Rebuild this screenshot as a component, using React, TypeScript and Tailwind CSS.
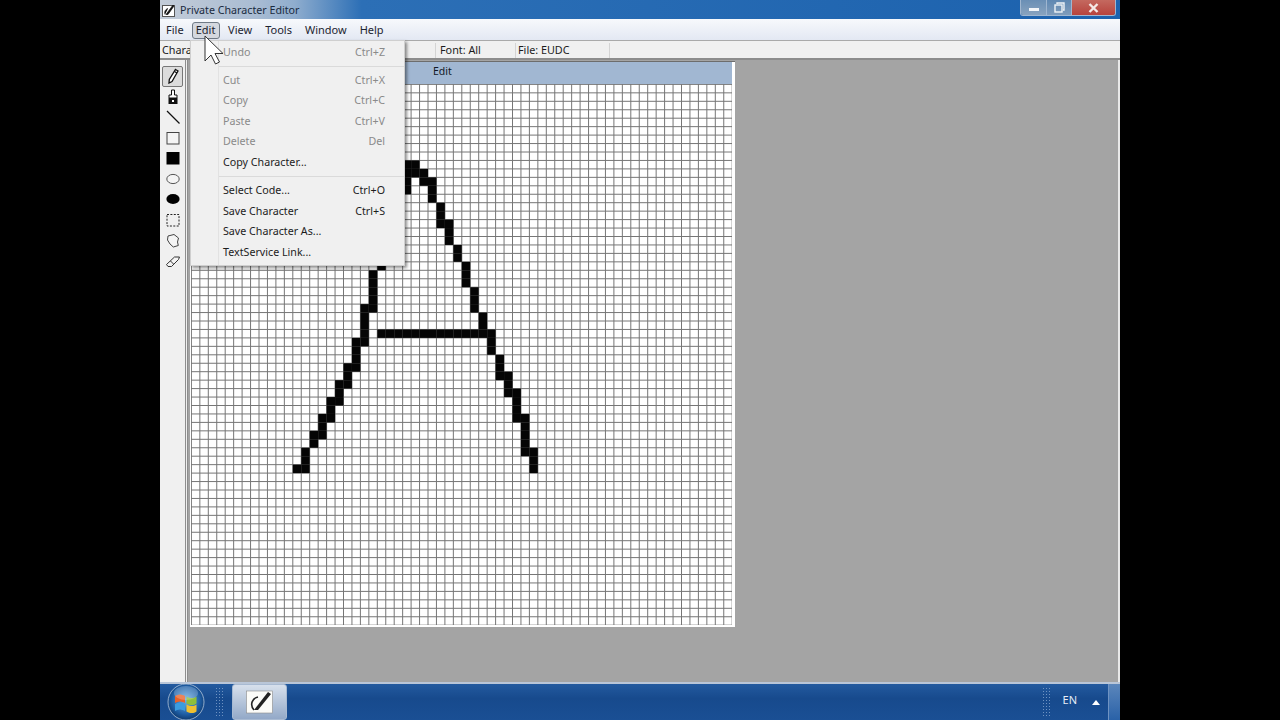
import React from "react";

const uiFont = { fontFamily: '"Noto Sans", "Open Sans", sans-serif' };

// [column, first row, last row] of the black squares on the 64x64 grid
const glyphRuns: [number, number, number][] = [
  [12, 45, 45], [13, 43, 45], [14, 41, 42], [15, 39, 41], [16, 37, 39], [17, 35, 37],
  [18, 33, 35], [19, 30, 33], [20, 26, 30], [21, 22, 26], [22, 19, 21], [23, 15, 18],
  [24, 11, 14], [25, 9, 12], [26, 9, 10], [27, 10, 11], [28, 11, 13], [29, 14, 16],
  [30, 16, 18], [31, 19, 20], [32, 21, 23], [33, 24, 26], [34, 27, 29], [35, 29, 31],
  [36, 32, 34], [37, 34, 36], [38, 36, 39], [39, 39, 43], [40, 43, 45],
  [22, 29, 29], [23, 29, 29], [24, 29, 29], [25, 29, 29], [26, 29, 29], [27, 29, 29],
  [28, 29, 29], [29, 29, 29], [30, 29, 29], [31, 29, 29], [32, 29, 29], [33, 29, 29],
];

const CELL = 8.45;

function EditGrid() {
  const lines = Array.from({ length: 65 }, (_, i) => i * CELL + 0.4);
  const cells: [number, number][] = [];
  glyphRuns.forEach(([c, a, b]) => {
    for (let r = a; r <= b; r++) cells.push([c, r]);
  });
  return (
    <svg width="541" height="541" viewBox="0 0 541 541" className="block bg-white">
      {lines.map((p) => (
        <g key={p} stroke="#767676" strokeWidth="1">
          <line x1={p} y1="0" x2={p} y2="541" />
          <line x1="0" y1={p} x2="541" y2={p} />
        </g>
      ))}
      {cells.map(([c, r]) => (
        <rect key={`${c}-${r}`} x={c * CELL + 0.4} y={r * CELL + 0.4} width={CELL} height={CELL} fill="#050505" />
      ))}
    </svg>
  );
}

const toolIcons: React.ReactNode[] = [
  <g fill="none" stroke="#111" strokeWidth="1.3">
    <path d="M10.5 1.5 13 3 7 13.5 4 15l.3-3.5z" fill="#fff" />
    <path d="M9.5 3.5 12 5" />
  </g>,
  <g fill="#111">
    <path d="M6.5 1h3v5h2.5v3H4V6h2.5z" fill="#fff" stroke="#111" />
    <path d="M3.5 9h9v6h-9z" />
    <path d="M7 11h2v2H7z" fill="#fff" />
  </g>,
  <path d="M2 2 14.5 14.5" stroke="#111" strokeWidth="1.2" />,
  <rect x="2" y="2.5" width="12" height="11.5" fill="#f4f4f4" stroke="#444" />,
  <rect x="1.5" y="2" width="13" height="12.5" fill="#000" />,
  <ellipse cx="8" cy="8" rx="6.2" ry="4.6" fill="#f4f4f4" stroke="#555" />,
  <ellipse cx="8" cy="8" rx="6.6" ry="5" fill="#000" />,
  <rect x="2" y="2.5" width="12" height="11.5" fill="none" stroke="#222" strokeDasharray="2 1.4" />,
  <path d="M3 4 9 2.5l4.5 3.5-1 4 .8 3.5-5 1.5L5 12 2.5 8z" fill="#f4f4f4" stroke="#444" />,
  <g stroke="#333" fill="#f4f4f4">
    <path d="M1.5 11.5 9.5 4h5l-1 2.5L6.5 13.5H3z" />
    <path d="M5.5 8 8.5 11" />
  </g>,
];

function ToolBar() {
  return (
    <div className="w-[28px] shrink-0 flex flex-col items-center pt-[6px] bg-[#f0f0f0] border-r-[3px] border-double border-[#8e8e8e]">
      {toolIcons.map((icon, i) => (
        <div
          key={i}
          className={`w-[21px] h-[20.5px] shrink-0 flex items-center justify-center rounded-[2px] ${
            i === 0 ? "bg-[#dcdcdc] border border-[#777]" : ""
          }`}
        >
          <svg width="16" height="16" viewBox="0 0 16 16">
            {icon}
          </svg>
        </div>
      ))}
    </div>
  );
}

function MenuRow({ label, keys, off }: { label: string; keys?: string; off?: boolean }) {
  return (
    <div className={`h-[20.6px] flex items-center justify-between pl-[32px] pr-[19px] ${off ? "text-[#8a8a8a]" : "text-[#1c1c1c]"}`}>
      <span>{label}</span>
      {keys && <span>{keys}</span>}
    </div>
  );
}

function EditMenu() {
  return (
    <div
      style={uiFont}
      className="absolute left-[30px] top-[40px] w-[215px] h-[226px] pt-[1px] text-[10.7px] leading-none bg-[#f0f0f0] border border-[#cfcfcf] shadow-[2px_2px_3px_rgba(0,0,0,0.45)] z-10"
    >
      <div className="absolute left-[27px] top-0 bottom-0 w-[1px] bg-[#e2e2e2]" />
      <MenuRow label="Undo" keys="Ctrl+Z" off />
      <div className="h-[7px] ml-[28px] flex items-center">
        <div className="w-full h-[1px] bg-[#dadada]" />
      </div>
      <MenuRow label="Cut" keys="Ctrl+X" off />
      <MenuRow label="Copy" keys="Ctrl+C" off />
      <MenuRow label="Paste" keys="Ctrl+V" off />
      <MenuRow label="Delete" keys="Del" off />
      <MenuRow label="Copy Character..." />
      <div className="h-[7.5px] ml-[28px] flex items-center">
        <div className="w-full h-[1px] bg-[#dadada]" />
      </div>
      <MenuRow label="Select Code..." keys="Ctrl+O" />
      <MenuRow label="Save Character" keys="Ctrl+S" />
      <MenuRow label="Save Character As..." />
      <MenuRow label="TextService Link..." />
    </div>
  );
}

function TitleBar() {
  return (
    <div
      style={uiFont}
      className="h-[19px] shrink-0 flex items-start justify-between pr-[4px] bg-[linear-gradient(to_right,#c3ccd8_0%,#a9bcd3_10%,#8fadce_14%,#2c6fb6_21%,#1c62ae_100%)]"
    >
      <div className="flex items-center h-[20px] pl-[2px] gap-[5px] text-[10.7px] text-[#1a2b3f]">
        <svg width="13" height="13" viewBox="0 0 13 13">
          <rect x="0.5" y="1.5" width="12" height="11" fill="#fff" stroke="#555" />
          <path d="M3 10.5C2 7 4 5 6 4.5M4 10.5 11 1l1 1-6 8.5z" fill="#111" stroke="#111" strokeWidth="0.7" />
        </svg>
        <span>Private Character Editor</span>
      </div>
      <div className="flex h-[16px] rounded-b-[3px] border border-t-0 border-[#9fb6d0] overflow-hidden">
        <div className="w-[26px] flex items-center justify-center border-r border-[#9fb6d0] bg-[linear-gradient(to_bottom,#6a8fb5,#88a3bf)]">
          <div className="w-[10px] h-[3px] bg-[#f2f5f8] mt-[3px]" />
        </div>
        <div className="w-[25px] flex items-center justify-center border-r border-[#9fb6d0] bg-[linear-gradient(to_bottom,#5f88b2,#7f9cbb)]">
          <svg width="11" height="11" viewBox="0 0 11 11" fill="none" stroke="#eef2f6" strokeWidth="1.4">
            <rect x="1" y="3" width="7" height="7" />
            <path d="M3 2V1h7v7H9" />
          </svg>
        </div>
        <div className="w-[43px] flex items-center justify-center bg-[linear-gradient(to_bottom,#c4695f,#b7433d)]">
          <svg width="11" height="10" viewBox="0 0 11 10" stroke="#f4e9e6" strokeWidth="2.4">
            <path d="M1.5 1 9.5 9M9.5 1 1.5 9" />
          </svg>
        </div>
      </div>
    </div>
  );
}

function MenuBar() {
  return (
    <div
      style={uiFont}
      className="h-[22px] shrink-0 flex items-center pl-[2px] pt-[1px] text-[11px] text-[#1c2430] bg-[linear-gradient(to_bottom,#f7f9fc,#e3e8f3)] border-b border-[#a9a9a9]"
    >
      <span className="px-[5px] -ml-[1px]">File</span>
      <span className="ml-[3px] w-[28px] h-[17px] flex items-center justify-center rounded-[3px] bg-[#d4d8df] border border-[#6f7a86]">Edit</span>
      <span className="ml-[8.5px]">View</span>
      <span className="ml-[13px]">Tools</span>
      <span className="ml-[13px]">Window</span>
      <span className="ml-[13px]">Help</span>
    </div>
  );
}

function InfoBar() {
  return (
    <div
      style={uiFont}
      className="h-[19px] shrink-0 flex items-center pt-[2px] text-[10.8px] text-[#1c1c1c] bg-[#f0f0f0] border-b-2 border-[#8c8c8c]"
    >
      <span className="w-[275px] pl-[2px]">Chara</span>
      <span className="w-[80px] h-full flex items-center pl-[4px] border-l border-[#d4d4d4]">Font: All</span>
      <span className="w-[95px] h-full flex items-center pl-[2px] border-x border-[#d4d4d4]">File: EUDC</span>
    </div>
  );
}

function EditorWindow() {
  return (
    <div className="w-[545px] h-[566px] shrink-0 border-t border-[#6d6d6d] pl-[1px] pr-[3px] pb-[2px] bg-white">
      <div
        style={uiFont}
        className="h-[22px] flex items-center pl-[242px] pb-[2px] text-[10.5px] text-[#111827] bg-[#a1b7d2]"
      >
        Edit
      </div>
      <EditGrid />
    </div>
  );
}

function Cursor() {
  return (
    <svg className="absolute left-[44px] top-[35px] z-20" width="20" height="30" viewBox="0 0 20 30">
      <path
        d="M1 1v25l6-6 4.5 9 4-2-4.5-8.5H19z"
        fill="#fff"
        stroke="#333"
        strokeWidth="1"
        strokeLinejoin="round"
      />
    </svg>
  );
}

function StartOrb() {
  return (
    <svg width="38" height="38" viewBox="0 0 38 38">
      <defs>
        <radialGradient id="orb" cx="50%" cy="45%" r="55%">
          <stop offset="0%" stopColor="#6fb2e6" />
          <stop offset="70%" stopColor="#1f5fa6" />
          <stop offset="100%" stopColor="#0f3a70" />
        </radialGradient>
      </defs>
      <circle cx="19" cy="19" r="18" fill="url(#orb)" stroke="#c5d6e8" strokeOpacity="0.7" />
      <path d="M8 13c3-2 6-2 10 0v7c-4-2-7-2-10 0z" fill="#e8622a" />
      <path d="M19.5 13.6c4 2 7 2 10 0v6.8c-3 2-6 2-10 0z" fill="#8fbf3a" />
      <path d="M8 21c3-2 6-2 10 0v7c-4-2-7-2-10 0z" fill="#3a9ce0" />
      <path d="M19.5 21.6c4 2 7 2 10 0v6.8c-3 2-6 2-10 0z" fill="#f0c030" />
      <ellipse cx="19" cy="10" rx="12" ry="7" fill="#fff" opacity="0.22" />
    </svg>
  );
}

function GripDots() {
  return (
    <div className="w-[8px] h-[30px] bg-[radial-gradient(circle,#6f93c2_1px,transparent_1px)] bg-[length:3px_3px]" />
  );
}

function TaskBar() {
  return (
    <div className="h-[38px] shrink-0 flex items-center pl-[7px] border-t-2 border-[#b9c6d8] bg-[linear-gradient(to_bottom,#235a9f,#174a8d_40%,#1a4f94)]">
      <StartOrb />
      <div className="ml-[10px]">
        <GripDots />
      </div>
      <div className="ml-[9px] w-[55px] h-[36px] flex items-center justify-center rounded-[3px] border border-[#a8bad2] bg-[linear-gradient(to_bottom,#d7e0ec,#93a9c8)]">
        <svg width="28" height="24" viewBox="0 0 28 24">
          <rect x="0.5" y="1" width="26" height="22" fill="#fbfbf8" stroke="#8a8a8a" strokeWidth="0.6" />
          <path d="M8 20C3 14 7 8 12 7" fill="none" stroke="#222" strokeWidth="1.6" />
          <path d="M8 20 22 2l3 2-13 16z" fill="#222" />
        </svg>
      </div>
      <div className="flex-1" />
      <GripDots />
      <span style={uiFont} className="ml-[13px] pb-[4px] text-[11px] text-[#e6edf6]">EN</span>
      <div className="ml-[15px] w-0 h-0 border-x-[4px] border-x-transparent border-b-[5px] border-b-white" />
      <div className="ml-[8px] w-[12px] h-full border-l border-[#6f93c2] bg-[linear-gradient(to_bottom,#5b86bb,#2a62a8)]" />
    </div>
  );
}

export default function App() {
  return (
    <div className="w-[1280px] h-[720px] flex justify-center bg-black overflow-hidden">
      <div className="relative w-[960px] h-full flex flex-col">
        <TitleBar />
        <MenuBar />
        <InfoBar />
        <div className="flex-1 min-h-0 flex">
          <ToolBar />
          <div className="flex-1 flex pl-[2px] pt-[1px] bg-[#a4a4a4] border-r-2 border-[#e8e8e8]">
            <EditorWindow />
          </div>
        </div>
        <TaskBar />
        <EditMenu />
        <Cursor />
      </div>
    </div>
  );
}
